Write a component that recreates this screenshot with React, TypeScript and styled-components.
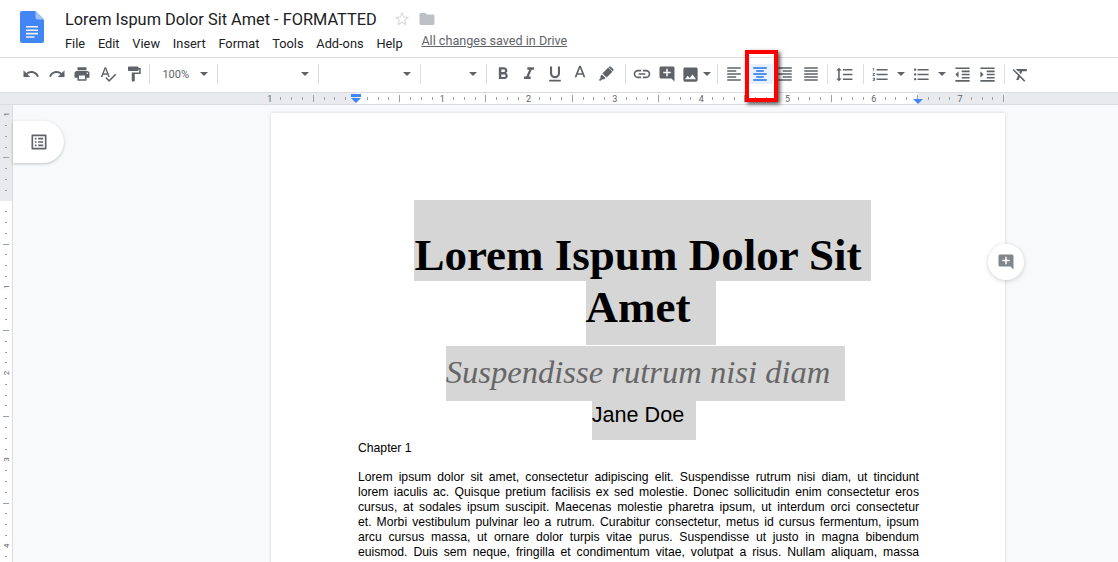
import React from 'react';
import styled, { createGlobalStyle } from 'styled-components';
import {
  MdUndo, MdRedo, MdPrint, MdSpellcheck, MdFormatPaint, MdFormatBold, MdFormatItalic, MdFormatUnderlined,
  MdLink, MdAddComment, MdPhoto, MdFormatAlignLeft, MdFormatAlignCenter, MdFormatAlignRight,
  MdFormatAlignJustify, MdFormatLineSpacing, MdFormatListNumbered, MdFormatListBulleted, MdFormatIndentDecrease,
  MdFormatIndentIncrease, MdFormatClear, MdStarBorder, MdFolder, MdListAlt,
} from 'react-icons/md';

const GlobalStyle = createGlobalStyle`
  html, body { margin: 0; padding: 0; background: #f8f9fa; }
  body { font-family: Roboto, "Liberation Sans", sans-serif; }
`;

const bodyLines = [
  'Lorem ipsum dolor sit amet, consectetur adipiscing elit. Suspendisse rutrum nisi diam, ut tincidunt',
  'lorem iaculis ac. Quisque pretium facilisis ex sed molestie. Donec sollicitudin enim consectetur eros',
  'cursus, at sodales ipsum suscipit. Maecenas molestie pharetra ipsum, ut interdum orci consectetur',
  'et. Morbi vestibulum pulvinar leo a rutrum. Curabitur consectetur, metus id cursus fermentum, ipsum',
  'arcu cursus massa, ut ornare dolor turpis vitae purus. Suspendisse ut justo in magna bibendum',
  'euismod. Duis sem neque, fringilla et condimentum vitae, volutpat a risus. Nullam aliquam, massa',
];

const menus = ['File', 'Edit', 'View', 'Insert', 'Format', 'Tools', 'Add-ons', 'Help'];

const TextColorIcon = () => (
  <svg width="20" height="20" viewBox="0 0 24 24" fill="currentColor">
    <path d="M11 2 5.500 16h2.250l1.120-3h6.250l1.120 3h2.250L13 2h-2zm-1.380 9L12 4.670 14.380 11H9.620z" />
  </svg>
);

const HighlighterIcon = () => (
  <svg width="18" height="18" viewBox="0 0 18 18" fill="currentColor">
    <path d="M11.200 2.600 15.400 6.800 9.600 12.600 5.400 8.400z" />
    <path d="M4.800 9.400 8.600 13.200 7 14.200 4.900 14.400 3.600 15.800 1.600 15.200 3.400 13.200 3.600 11.100z" />
    <path d="M12.200 1.800c.5-.5 1.200-.5 1.700 0l2.300 2.300c.5.5.5 1.200 0 1.700l-.5.5-4-4z" />
  </svg>
);

const DocsLogo = () => (
  <svg width="24" height="32" viewBox="0 0 24 32">
    <path d="M2 0h13.500L24 8.500V30a2 2 0 0 1-2 2H2a2 2 0 0 1-2-2V2a2 2 0 0 1 2-2z" fill="#4285f4" />
    <path d="M15.500 0 24 8.500h-6.500a2 2 0 0 1-2-2z" fill="#a1c2fa" />
    <path d="M6 15h12v1.600H6zM6 18.400h12V20H6zM6 21.800h12v1.600H6zM6 25.200h8.500v1.600H6z" fill="#f1f1f1" />
  </svg>
);

const INCH = 86.3;

const HorizontalRuler = () => {
  const zero = 356;
  const ticks: React.ReactNode[] = [];
  for (let i = -7; i <= 60; i++) {
    if (i % 8 === 0) continue;
    const x = Math.round(zero + (i * INCH) / 8) + 0.5;
    const h = i % 4 === 0 ? 7 : 3;
    ticks.push(<line key={i} x1={x} x2={x} y1={5.5 - h / 2} y2={5.5 + h / 2} stroke="#9aa0a6" />);
  }
  const labels = [-1, 1, 2, 3, 4, 5, 6, 7];
  return (
    <svg width="1118" height="11" style={{ display: 'block' }}>
      <rect width="1118" height="11" fill="#e8eaed" />
      <rect x={zero} width={562} height="11" fill="#fff" />
      {ticks}
      {labels.map((n) => (
        <text key={n} x={zero + n * INCH} y="9" fontSize="9" fontFamily="Roboto, sans-serif" fill="#5f6368" textAnchor="middle">
          {Math.abs(n)}
        </text>
      ))}
      <path d="M351 1h10v3h-10z" fill="#4285f4" />
      <path d="M351 5h10l-5 5z" fill="#4285f4" />
      <path d="M913 6h10l-5 5z" fill="#4285f4" />
    </svg>
  );
};

const VerticalRuler = () => {
  const zero = 95.5;
  const ticks: React.ReactNode[] = [];
  for (let i = -7; i <= 40; i++) {
    if (i % 8 === 0) continue;
    const y = Math.round(zero + (i * INCH) / 8) + 0.5;
    const w = i % 4 === 0 ? 6 : 2;
    ticks.push(<line key={i} y1={y} y2={y} x1={6 - w / 2} x2={6 + w / 2} stroke="#9aa0a6" />);
  }
  return (
    <svg width="12" height="460" style={{ display: 'block' }}>
      <rect width="12" height="96" fill="#e8eaed" />
      {ticks}
      {[-1, 1, 2, 3, 4].map((n) => (
        <text
          key={n}
          transform={`translate(9 ${zero + n * INCH}) rotate(-90)`}
          fontSize="8"
          fontFamily="Roboto, sans-serif"
          fill="#5f6368"
          textAnchor="middle"
        >
          {Math.abs(n)}
        </text>
      ))}
    </svg>
  );
};

export default function App() {
  return (
    <>
      <GlobalStyle />
      <Screen>
        <Header>
          <LogoSlot>
            <DocsLogo />
          </LogoSlot>
          <HeaderText>
            <TitleRow>
              <DocTitle>Lorem Ispum Dolor Sit Amet - FORMATTED</DocTitle>
              <StarIcon>
                <MdStarBorder size={18} />
              </StarIcon>
              <FolderIcon>
                <MdFolder size={18} />
              </FolderIcon>
            </TitleRow>
            <MenuRow>
              {menus.map((m) => (
                <MenuItem key={m}>{m}</MenuItem>
              ))}
              <SaveStatus>All changes saved in Drive</SaveStatus>
            </MenuRow>
          </HeaderText>
        </Header>

        <Toolbar>
          <IconButton><MdUndo size={18} /></IconButton>
          <IconButton><MdRedo size={18} /></IconButton>
          <IconButton><MdPrint size={18} /></IconButton>
          <IconButton><MdSpellcheck size={18} /></IconButton>
          <IconButton><MdFormatPaint size={18} /></IconButton>
          <Separator />
          <Select $width={61}>
            <ZoomValue>100%</ZoomValue>
            <Caret />
          </Select>
          <Separator />
          <Select $width={94}><Caret /></Select>
          <Separator />
          <Select $width={95}><Caret /></Select>
          <Separator />
          <Select $width={59}><Caret /></Select>
          <Separator />
          <IconButton><MdFormatBold size={20} /></IconButton>
          <IconButton><MdFormatItalic size={20} /></IconButton>
          <IconButton><MdFormatUnderlined size={20} /></IconButton>
          <IconButton><TextColorIcon /></IconButton>
          <IconButton><HighlighterIcon /></IconButton>
          <Separator $before={6} />
          <IconButton><MdLink size={20} /></IconButton>
          <IconButton><MdAddComment size={18} /></IconButton>
          <IconButton $width={21}><MdPhoto size={19} /></IconButton>
          <CaretSlot $width={11}><Caret /></CaretSlot>
          <Separator $before={5} />
          <IconButton><MdFormatAlignLeft size={18} /></IconButton>
          <IconButton $active><MdFormatAlignCenter size={18} /></IconButton>
          <IconButton><MdFormatAlignRight size={18} /></IconButton>
          <IconButton><MdFormatAlignJustify size={18} /></IconButton>
          <Separator />
          <IconButton $width={27}><MdFormatLineSpacing size={19} /></IconButton>
          <Separator $before={5} />
          <IconButton $width={27.2}><MdFormatListNumbered size={19} /></IconButton>
          <CaretSlot $width={14}><Caret /></CaretSlot>
          <IconButton><MdFormatListBulleted size={19} /></IconButton>
          <CaretSlot $width={15.5}><Caret /></CaretSlot>
          <IconButton><MdFormatIndentDecrease size={19} /></IconButton>
          <IconButton><MdFormatIndentIncrease size={19} /></IconButton>
          <Separator />
          <IconButton><MdFormatClear size={19} /></IconButton>
          <RedFrame />
        </Toolbar>

        <RulerBar>
          <HorizontalRuler />
        </RulerBar>

        <Workspace>
          <VerticalRulerBar>
            <VerticalRuler />
          </VerticalRulerBar>
          <OutlineTab>
            <MdListAlt size={20} />
          </OutlineTab>
          <Page>
            <CommentBubble>
              <MdAddComment size={18} />
            </CommentBubble>
            <PageClip>
              <TitleBlock>
                <TitleLine $top={29} $bottom={0} $trail={9}>Lorem Ispum Dolor Sit</TitleLine>
                <TitleLine $top={0} $bottom={12} $trail={26}>Amet</TitleLine>
              </TitleBlock>
              <Subtitle>Suspendisse rutrum nisi diam</Subtitle>
              <Author>Jane Doe</Author>
              <Chapter>Chapter 1</Chapter>
              <BodyText>
                {bodyLines.map((line) => (
                  <BodyLine key={line}>{line}</BodyLine>
                ))}
              </BodyText>
            </PageClip>
          </Page>
        </Workspace>
      </Screen>
    </>
  );
}

const Screen = styled.div`
  position: relative;
  width: 1118px;
  height: 562px;
  overflow: hidden;
  background: #f8f9fa;
`;

const Header = styled.header`
  display: flex;
  height: 58px;
  box-sizing: border-box;
  padding-left: 20px;
  background: #fff;
  border-bottom: 1px solid #dadce0;
`;

const LogoSlot = styled.div`
  width: 45px;
  padding-top: 11px;
`;

const HeaderText = styled.div`
  display: flex;
  flex-direction: column;
`;

const TitleRow = styled.div`
  display: flex;
  align-items: center;
  height: 20px;
  margin-top: 9px;
`;

const DocTitle = styled.div`
  width: 328px;
  font-size: 16.35px;
  color: #202124;
  white-space: nowrap;
`;

const StarIcon = styled.span`
  display: flex;
  color: #dadce0;
  width: 25px;
`;

const FolderIcon = styled.span`
  display: flex;
  color: #bdc1c6;
`;

const MenuRow = styled.nav`
  display: flex;
  gap: 12.8px;
  margin-top: 6px;
`;

const MenuItem = styled.span`
  font-size: 12.8px;
  line-height: 18px;
  color: #202124;
`;

const SaveStatus = styled.span`
  margin: -3px 0 0 6px;
  font-size: 12.6px;
  line-height: 18px;
  color: #5f6368;
  text-decoration: underline;
  white-space: nowrap;
`;

const Toolbar = styled.div`
  position: relative;
  display: flex;
  align-items: center;
  height: 35px;
  box-sizing: border-box;
  padding: 0 0 2px 18px;
  background: #fff;
  border-bottom: 1px solid #dadce0;
`;

const IconButton = styled.div<{ $active?: boolean; $width?: number }>`
  display: flex;
  flex: none;
  align-items: center;
  justify-content: center;
  width: ${(p) => p.$width ?? 25.7}px;
  height: 20px;
  color: ${(p) => (p.$active ? '#1a73e8' : '#5f6368')};
  background: ${(p) => (p.$active ? '#e8f0fe' : 'transparent')};
`;

const Separator = styled.div<{ $before?: number }>`
  flex: none;
  width: 1px;
  height: 20px;
  margin: 0 3px 0 ${(p) => p.$before ?? 3}px;
  background: #dadce0;
`;

const Select = styled.div<{ $width: number }>`
  display: flex;
  flex: none;
  align-items: center;
  justify-content: flex-end;
  width: ${(p) => p.$width}px;
  padding-right: 6px;
  box-sizing: border-box;
`;

const ZoomValue = styled.span`
  margin-right: auto;
  padding-left: 9px;
  font-size: 11px;
  color: #5f6368;
`;

const Caret = styled.span`
  width: 0;
  height: 0;
  border-left: 4px solid transparent;
  border-right: 4px solid transparent;
  border-top: 4px solid #5f6368;
`;

const CaretSlot = styled.div<{ $width: number }>`
  display: flex;
  flex: none;
  justify-content: center;
  width: ${(p) => p.$width}px;
`;

const RedFrame = styled.div`
  position: absolute;
  left: 745px;
  top: -8px;
  width: 25px;
  height: 44px;
  border: 4px solid #f00;
  box-shadow: 2px 2px 4px rgba(0, 0, 0, 0.7);
`;

const RulerBar = styled.div`
  height: 12px;
  box-sizing: border-box;
  border-bottom: 1px solid #dadce0;
`;

const Workspace = styled.main`
  position: relative;
  display: flex;
  height: 457px;
`;

const VerticalRulerBar = styled.div`
  flex: none;
  width: 12px;
  height: 100%;
  background: #fff;
  border-right: 1px solid #dadce0;
  overflow: hidden;
`;

const OutlineTab = styled.div`
  position: absolute;
  left: 13px;
  top: 16px;
  display: flex;
  align-items: center;
  justify-content: center;
  width: 51px;
  height: 42px;
  color: #5f6368;
  background: #fff;
  border-radius: 0 21px 21px 0;
  box-shadow: 0 1px 3px rgba(60, 64, 67, 0.3);
`;

const Page = styled.section`
  position: relative;
  flex: none;
  width: 734px;
  height: 480px;
  margin: 8px 0 0 258px;
  background: #fff;
  box-shadow: 0 0 3px rgba(60, 64, 67, 0.2);
`;

const PageClip = styled.div`
  display: flex;
  flex-direction: column;
  align-items: center;
  box-sizing: border-box;
  height: 100%;
  padding-top: 87px;
`;

const CommentBubble = styled.div`
  position: absolute;
  left: 717px;
  top: 131px;
  display: flex;
  align-items: center;
  justify-content: center;
  width: 36px;
  height: 36px;
  color: #80868b;
  background: #fff;
  border-radius: 50%;
  box-shadow: 0 1px 4px rgba(60, 64, 67, 0.25);
  z-index: 1;
`;

const TitleBlock = styled.div`
  display: flex;
  flex-direction: column;
  align-items: center;
`;

const TitleLine = styled.h1<{ $top: number; $bottom: number; $trail: number }>`
  margin: 0 -${(p) => p.$trail}px 0 0;
  padding: ${(p) => p.$top}px ${(p) => p.$trail}px ${(p) => p.$bottom}px 0;
  font-family: "Liberation Serif", serif;
  font-size: 45px;
  line-height: 52px;
  font-weight: 700;
  color: #000;
  background: #d6d6d6;
  white-space: nowrap;
`;

const Subtitle = styled.h2`
  margin: 1px -15px 0 0;
  padding: 0 15px 2px 0;
  font-family: "Liberation Serif", serif;
  font-size: 32.6px;
  line-height: 53px;
  font-style: italic;
  font-weight: 400;
  color: #666;
  background: #d6d6d6;
  white-space: nowrap;
`;

const Author = styled.div`
  margin-right: -12px;
  padding: 0 12px 12px 0;
  font-family: "Liberation Sans", sans-serif;
  font-size: 21.6px;
  line-height: 27px;
  color: #000;
  background: #d6d6d6;
`;

const Chapter = styled.div`
  align-self: flex-start;
  margin: 1px 0 0 87px;
  font-family: "Liberation Sans", sans-serif;
  font-size: 12.2px;
  line-height: 15px;
  color: #000;
`;

const BodyText = styled.div`
  align-self: flex-start;
  width: 561px;
  margin: 14px 0 0 87px;
  font-family: "Liberation Sans", sans-serif;
  font-size: 12.2px;
  line-height: 15px;
  color: #000;
`;

const BodyLine = styled.div`
  text-align: justify;
  text-align-last: justify;
`;
